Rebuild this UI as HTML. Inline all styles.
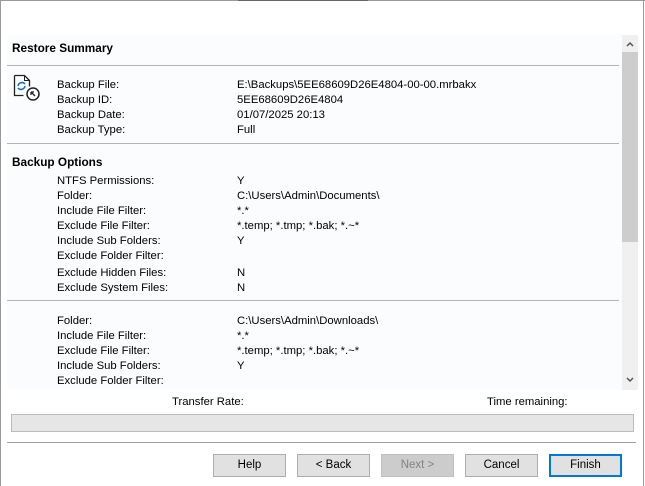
<!DOCTYPE html><html><head><style>
body{margin:0;width:645px;height:486px;background:#fff;position:relative;overflow:hidden;font-family:"Liberation Sans",sans-serif;font-size:11.3px;color:#000}
.a{position:absolute;white-space:nowrap}
.l{left:57px;margin-top:2px}.v{left:237px;margin-top:2px}
.hr{position:absolute;left:7px;width:612px;height:1px;background:#b4b4b4}
.btn{position:absolute;top:454px;width:71px;height:21px;border:1px solid #adadad;background:#e1e1e1;text-align:center;line-height:21px;font-size:11.5px}
</style></head><body>
<div class="a" style="left:0;top:0;width:1px;height:486px;background:#999"></div>
<div class="a" style="left:643px;top:0;width:1px;height:486px;background:#999"></div>
<div class="a" style="left:0;top:0;width:645px;height:1px;background:#999"></div>
<div class="a" style="left:238px;top:0;width:130px;height:1px;background:#666"></div>
<div class="a" style="left:7px;top:34px;width:615px;height:356px;background:#fafcfd"></div>
<div class="a" style="left:12px;top:41px;font-weight:bold;font-size:11.8px">Restore Summary</div>
<div class="hr" style="top:65px"></div>
<svg class="a" style="left:13px;top:74px" width="30" height="28" viewBox="0 0 30 28"><path d="M1.5 1.5h10l5 5v6M1.5 1.5v20h9" fill="none" stroke="#222" stroke-width="1.3"/><path d="M11.5 1.5v5h5" fill="none" stroke="#222"/><path d="M5 12a4 4 0 0 1 7-2M12 12a4 4 0 0 1-7 2" fill="none" stroke="#1a6fc4" stroke-width="1.5"/><circle cx="20" cy="20" r="6" fill="#fff" stroke="#222" stroke-width="1.5"/><path d="M22 22l-4-4M18 18v3M18 18h3" stroke="#222" stroke-width="1.3" fill="none"/></svg>
<div class="a l" style="top:77px">Backup File:</div><div class="a v" style="top:77px">E:\Backups\5EE68609D26E4804-00-00.mrbakx</div>
<div class="a l" style="top:92px">Backup ID:</div><div class="a v" style="top:92px">5EE68609D26E4804</div>
<div class="a l" style="top:107px">Backup Date:</div><div class="a v" style="top:107px">01/07/2025 20:13</div>
<div class="a l" style="top:122px">Backup Type:</div><div class="a v" style="top:122px">Full</div>
<div class="hr" style="top:143px"></div>
<div class="a" style="left:12px;top:155px;font-weight:bold;font-size:11.8px">Backup Options</div>
<div class="a l" style="top:173px">NTFS Permissions:</div><div class="a v" style="top:173px">Y</div>
<div class="a l" style="top:188px">Folder:</div><div class="a v" style="top:188px">C:\Users\Admin\Documents\</div>
<div class="a l" style="top:203px">Include File Filter:</div><div class="a v" style="top:203px">*.*</div>
<div class="a l" style="top:218px">Exclude File Filter:</div><div class="a v" style="top:218px">*.temp; *.tmp; *.bak; *.~*</div>
<div class="a l" style="top:233px">Include Sub Folders:</div><div class="a v" style="top:233px">Y</div>
<div class="a l" style="top:248px">Exclude Folder Filter:</div>
<div class="a l" style="top:265px">Exclude Hidden Files:</div><div class="a v" style="top:265px">N</div>
<div class="a l" style="top:280px">Exclude System Files:</div><div class="a v" style="top:280px">N</div>
<div class="hr" style="top:300px"></div>
<div class="a l" style="top:313px">Folder:</div><div class="a v" style="top:313px">C:\Users\Admin\Downloads\</div>
<div class="a l" style="top:328px">Include File Filter:</div><div class="a v" style="top:328px">*.*</div>
<div class="a l" style="top:343px">Exclude File Filter:</div><div class="a v" style="top:343px">*.temp; *.tmp; *.bak; *.~*</div>
<div class="a l" style="top:358px">Include Sub Folders:</div><div class="a v" style="top:358px">Y</div>
<div class="a l" style="top:373px">Exclude Folder Filter:</div>
<div class="a" style="left:622px;top:35px;width:16px;height:355px;background:#f0f0f0"></div>
<div class="a" style="left:622px;top:52px;width:16px;height:190px;background:#cdcdcd"></div>
<svg class="a" style="left:622px;top:36px" width="16" height="16"><path d="M5 10l3-3 3 3" fill="none" stroke="#555" stroke-width="1.5"/></svg>
<svg class="a" style="left:622px;top:372px" width="16" height="16"><path d="M5 6l3 3 3-3" fill="none" stroke="#555" stroke-width="1.5"/></svg>
<div class="a" style="left:172px;top:396px">Transfer Rate:</div>
<div class="a" style="left:487px;top:396px">Time remaining:</div>
<div class="a" style="left:11px;top:414px;width:621px;height:16px;border:1px solid #bcbcbc;background:#e6e6e6"></div>
<div class="a" style="left:7px;top:442px;width:629px;height:1px;background:#a0a0a0"></div>
<div class="btn" style="left:213px">Help</div>
<div class="btn" style="left:297px">&lt; Back</div>
<div class="btn" style="left:381px;color:#838383;background:#ccc;border-color:#bfbfbf">Next &gt;</div>
<div class="btn" style="left:465px">Cancel</div>
<div class="btn" style="left:549px;border:2px solid #0078d7;width:69px;height:19px;line-height:19px">Finish</div>
</body></html>
